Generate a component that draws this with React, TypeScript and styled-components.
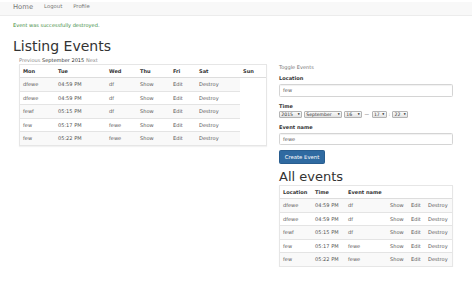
import { createGlobalStyle, styled } from "styled-components"

const Global = createGlobalStyle`
  html, body {
    margin: 0;
    padding: 0;
    background: #fff;
  }
  body {
    font-family: "DejaVu Sans", Verdana, sans-serif;
    font-size: 5.05px;
    line-height: 7px;
    color: #333;
  }
`

const events = [
  { location: "dfewe", time: "04:59 PM", name: "df" },
  { location: "dfewe", time: "04:59 PM", name: "df" },
  { location: "fewf", time: "05:15 PM", name: "df" },
  { location: "few", time: "05:17 PM", name: "fewe" },
  { location: "few", time: "05:22 PM", name: "fewe" },
]

const Navbar = styled.nav`
  margin: 2px 2px 0 0;
  height: 14px;
  box-sizing: border-box;
  background: #f8f8f8;
  border-bottom: 1px solid #ececec;
  display: flex;
  align-items: center;
  gap: 11px;
  padding: 0 0 4px 13px;
`

const Brand = styled.a`
  font-size: 6.8px;
  line-height: 8px;
  color: #777;
`

const NavLink = styled.a`
  font-size: 5.3px;
  color: #777;
`

const Container = styled.div`
  padding: 0 13px;
`

const Notice = styled.p`
  margin: 6.2px 0 0;
  color: #3c8a3c;
`

const Title = styled.h1`
  margin: 8.6px 0 0;
  font-size: 14px;
  line-height: 16px;
  font-weight: normal;
  color: #333;
`

const Row = styled.div`
  display: flex;
  gap: 12px;
  margin-top: 3.5px;
`

const LeftCol = styled.div`
  width: 254px;
  box-sizing: border-box;
  padding-left: 6px;
`

const RightCol = styled.div`
  width: 174px;
  display: flex;
  flex-direction: column;
  align-items: flex-start;
`

const Pager = styled.div`
  color: #333;
`

const PagerLink = styled.a`
  color: #8a8a8a;
`

const TableBox = styled.div<{ $width: number; $top?: number }>`
  width: ${(p) => p.$width}px;
  margin-top: ${(p) => p.$top ?? 0}px;
  box-sizing: border-box;
  border: 1px solid #e6e6e6;
  box-shadow: 0 1px 1px rgba(0, 0, 0, 0.05);
  align-self: stretch;
`

const Table = styled.table`
  width: 100%;
  table-layout: fixed;
  border-collapse: separate;
  border-spacing: 0;
`

const Th = styled.th`
  text-align: left;
  font-weight: bold;
  color: #333;
  padding: 2.85px 3px;
  line-height: 6px;
  border-bottom: 1px solid #ddd;
  white-space: nowrap;
`

const Tr = styled.tr<{ $striped: boolean }>`
  & td {
    background: ${(p) => (p.$striped ? "#f9f9f9" : "transparent")};
  }
  &:not(:last-child) td {
    border-bottom: 1px solid #e4e4e4;
  }
`

const Td = styled.td`
  padding: 3px;
  line-height: 6.6px;
  color: #555;
  white-space: nowrap;
`

const Muted = styled.div`
  color: #777;
  margin-top: 7px;
`

const Label = styled.label<{ $top: number }>`
  display: block;
  font-weight: bold;
  color: #333;
  margin-top: ${(p) => p.$top}px;
`

const Input = styled.div<{ $top: number; $height: number }>`
  align-self: stretch;
  box-sizing: border-box;
  margin-top: ${(p) => p.$top}px;
  height: ${(p) => p.$height}px;
  border: 1px solid #d4d4d4;
  border-radius: 1.5px;
  box-shadow: inset 0 1px 1px rgba(0, 0, 0, 0.06);
  padding: 0 3px;
  display: flex;
  align-items: center;
  color: #555;
`

const SelectRow = styled.div`
  display: flex;
  align-items: center;
  gap: 2px;
  margin-top: 1.8px;
  height: 7px;
  font-size: 4.6px;
`

const Select = styled.span<{ $width: number }>`
  width: ${(p) => p.$width}px;
  height: 7px;
  box-sizing: border-box;
  border: 1px solid #b4b4b4;
  border-radius: 1px;
  background: linear-gradient(#fbfbfb, #e2e2e2);
  display: flex;
  align-items: center;
  justify-content: space-between;
  padding: 0 1.3px;
  color: #333;
  line-height: 5px;

  &::after {
    content: "▼";
    font-size: 2.6px;
    color: #222;
  }
`

const Sep = styled.span<{ $pad: number }>`
  color: #555;
  padding: 0 ${(p) => p.$pad}px;
`

const Button = styled.button`
  margin-top: 5px;
  height: 13.3px;
  width: 46px;
  box-sizing: border-box;
  background: #2f6aa1;
  border: 1px solid #285d8f;
  border-radius: 1.5px;
  color: #fff;
  font-family: inherit;
  font-size: 5.3px;
  padding: 0;
`

const Subtitle = styled.h2`
  margin: 5.4px 0 0;
  font-size: 13px;
  line-height: 15px;
  font-weight: normal;
  color: #333;
`

function EventRows() {
  return (
    <tbody>
      {events.map((e, i) => (
        <Tr key={i} $striped={i % 2 === 0}>
          <Td>{e.location}</Td>
          <Td>{e.time}</Td>
          <Td>{e.name}</Td>
          <Td>Show</Td>
          <Td>Edit</Td>
          <Td>Destroy</Td>
        </Tr>
      ))}
    </tbody>
  )
}

export default function App() {
  return (
    <>
      <Global />
      <Navbar>
        <Brand>Home</Brand>
        <NavLink>Logout</NavLink>
        <NavLink>Profile</NavLink>
      </Navbar>
      <Container>
        <Notice>Event was successfully destroyed.</Notice>
        <Title>Listing Events</Title>
        <Row>
          <LeftCol>
            <Pager>
              <PagerLink>Previous</PagerLink> September 2015 <PagerLink>Next</PagerLink>
            </Pager>
            <TableBox $width={248}>
              <Table>
                <colgroup>
                  <col style={{ width: 35 }} />
                  <col style={{ width: 51 }} />
                  <col style={{ width: 31 }} />
                  <col style={{ width: 33 }} />
                  <col style={{ width: 26 }} />
                  <col style={{ width: 44 }} />
                  <col />
                </colgroup>
                <thead>
                  <tr>
                    <Th>Mon</Th>
                    <Th>Tue</Th>
                    <Th>Wed</Th>
                    <Th>Thu</Th>
                    <Th>Fri</Th>
                    <Th>Sat</Th>
                    <Th>Sun</Th>
                  </tr>
                </thead>
                <EventRows />
              </Table>
            </TableBox>
          </LeftCol>
          <RightCol>
            <Muted>Toggle Events</Muted>
            <Label $top={4}>Location</Label>
            <Input $top={2.2} $height={12.5}>few</Input>
            <Label $top={5.7}>Time</Label>
            <SelectRow>
              <Select $width={23}>2015</Select>
              <Select $width={38}>September</Select>
              <Select $width={18}>16</Select>
              <Sep $pad={0.5}>—</Sep>
              <Select $width={15}>17</Select>
              <Sep $pad={0}>:</Sep>
              <Select $width={16}>22</Select>
            </SelectRow>
            <Label $top={5.2}>Event name</Label>
            <Input $top={2.5} $height={12.3}>fewe</Input>
            <Button>Create Event</Button>
            <Subtitle>All events</Subtitle>
            <TableBox $width={174} $top={1.3}>
              <Table>
                <colgroup>
                  <col style={{ width: 32 }} />
                  <col style={{ width: 33 }} />
                  <col style={{ width: 42 }} />
                  <col style={{ width: 21 }} />
                  <col style={{ width: 17 }} />
                  <col />
                </colgroup>
                <thead>
                  <tr>
                    <Th>Location</Th>
                    <Th>Time</Th>
                    <Th>Event name</Th>
                    <Th colSpan={3}></Th>
                  </tr>
                </thead>
                <EventRows />
              </Table>
            </TableBox>
          </RightCol>
        </Row>
      </Container>
    </>
  )
}
